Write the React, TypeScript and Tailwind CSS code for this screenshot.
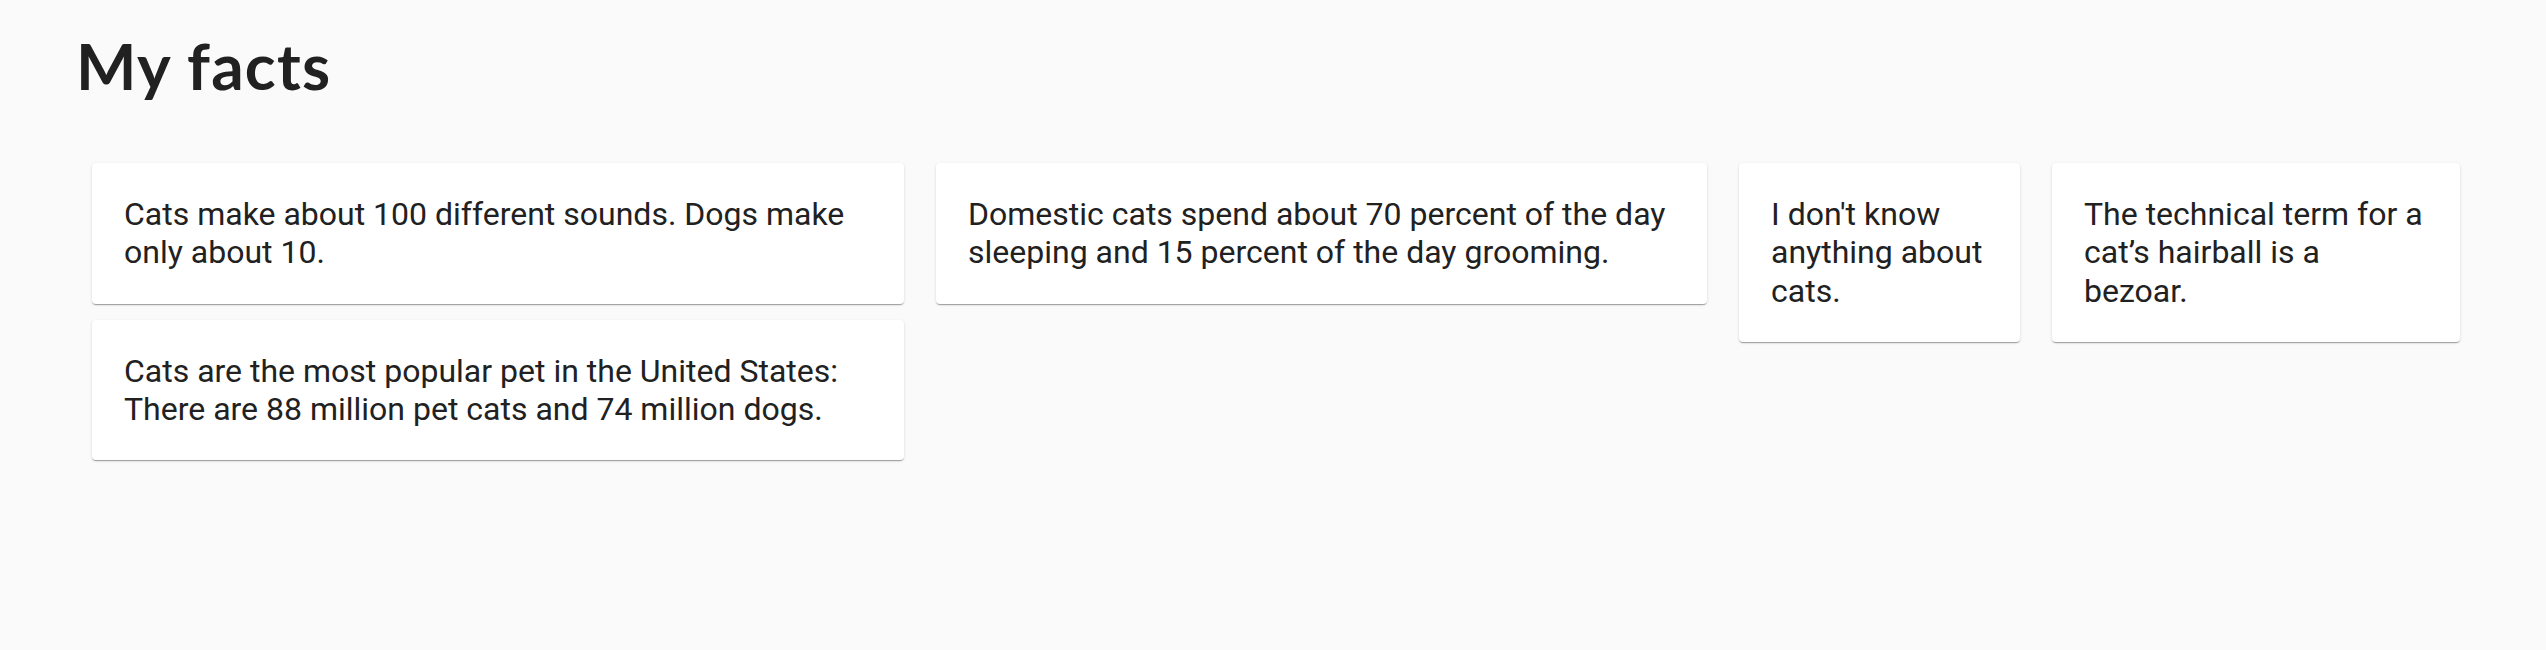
const columns = [
  {
    width: "w-[812px]",
    facts: [
      "Cats make about 100 different sounds. Dogs make only about 10.",
      "Cats are the most popular pet in the United States: There are 88 million pet cats and 74 million dogs.",
    ],
  },
  {
    width: "w-[771px]",
    facts: ["Domestic cats spend about 70 percent of the day sleeping and 15 percent of the day grooming."],
  },
  { width: "w-[281px]", facts: ["I don't know anything about cats."] },
  { width: "w-[408px]", facts: ["The technical term for a cat’s hairball is a bezoar."] },
];

function FactCard({ text }: { text: string }) {
  return (
    <div className="bg-white rounded-[4px] p-8 shadow-[0_2px_1px_-1px_rgba(0,0,0,0.2),0_1px_1px_0_rgba(0,0,0,0.14),0_1px_3px_0_rgba(0,0,0,0.12)]">
      <p className="text-[32px] leading-[1.2] text-[#212121] font-['Roboto',sans-serif]">{text}</p>
    </div>
  );
}

export default function App() {
  return (
    <div className="min-h-screen bg-[#fafafa] px-[76px] pt-[28px]">
      <h1 className="text-[64px] leading-[1.2] font-bold tracking-[1.2px] text-[#212121] font-['Lato',sans-serif]">
        My facts
      </h1>
      {/* masonry: each column stacks its own cards */}
      <div className="mt-[58px] ml-4 flex items-start gap-8">
        {columns.map((col, i) => (
          <div key={i} className={`${col.width} flex flex-col gap-4`}>
            {col.facts.map((f, j) => (
              <FactCard key={j} text={f} />
            ))}
          </div>
        ))}
      </div>
    </div>
  );
}
